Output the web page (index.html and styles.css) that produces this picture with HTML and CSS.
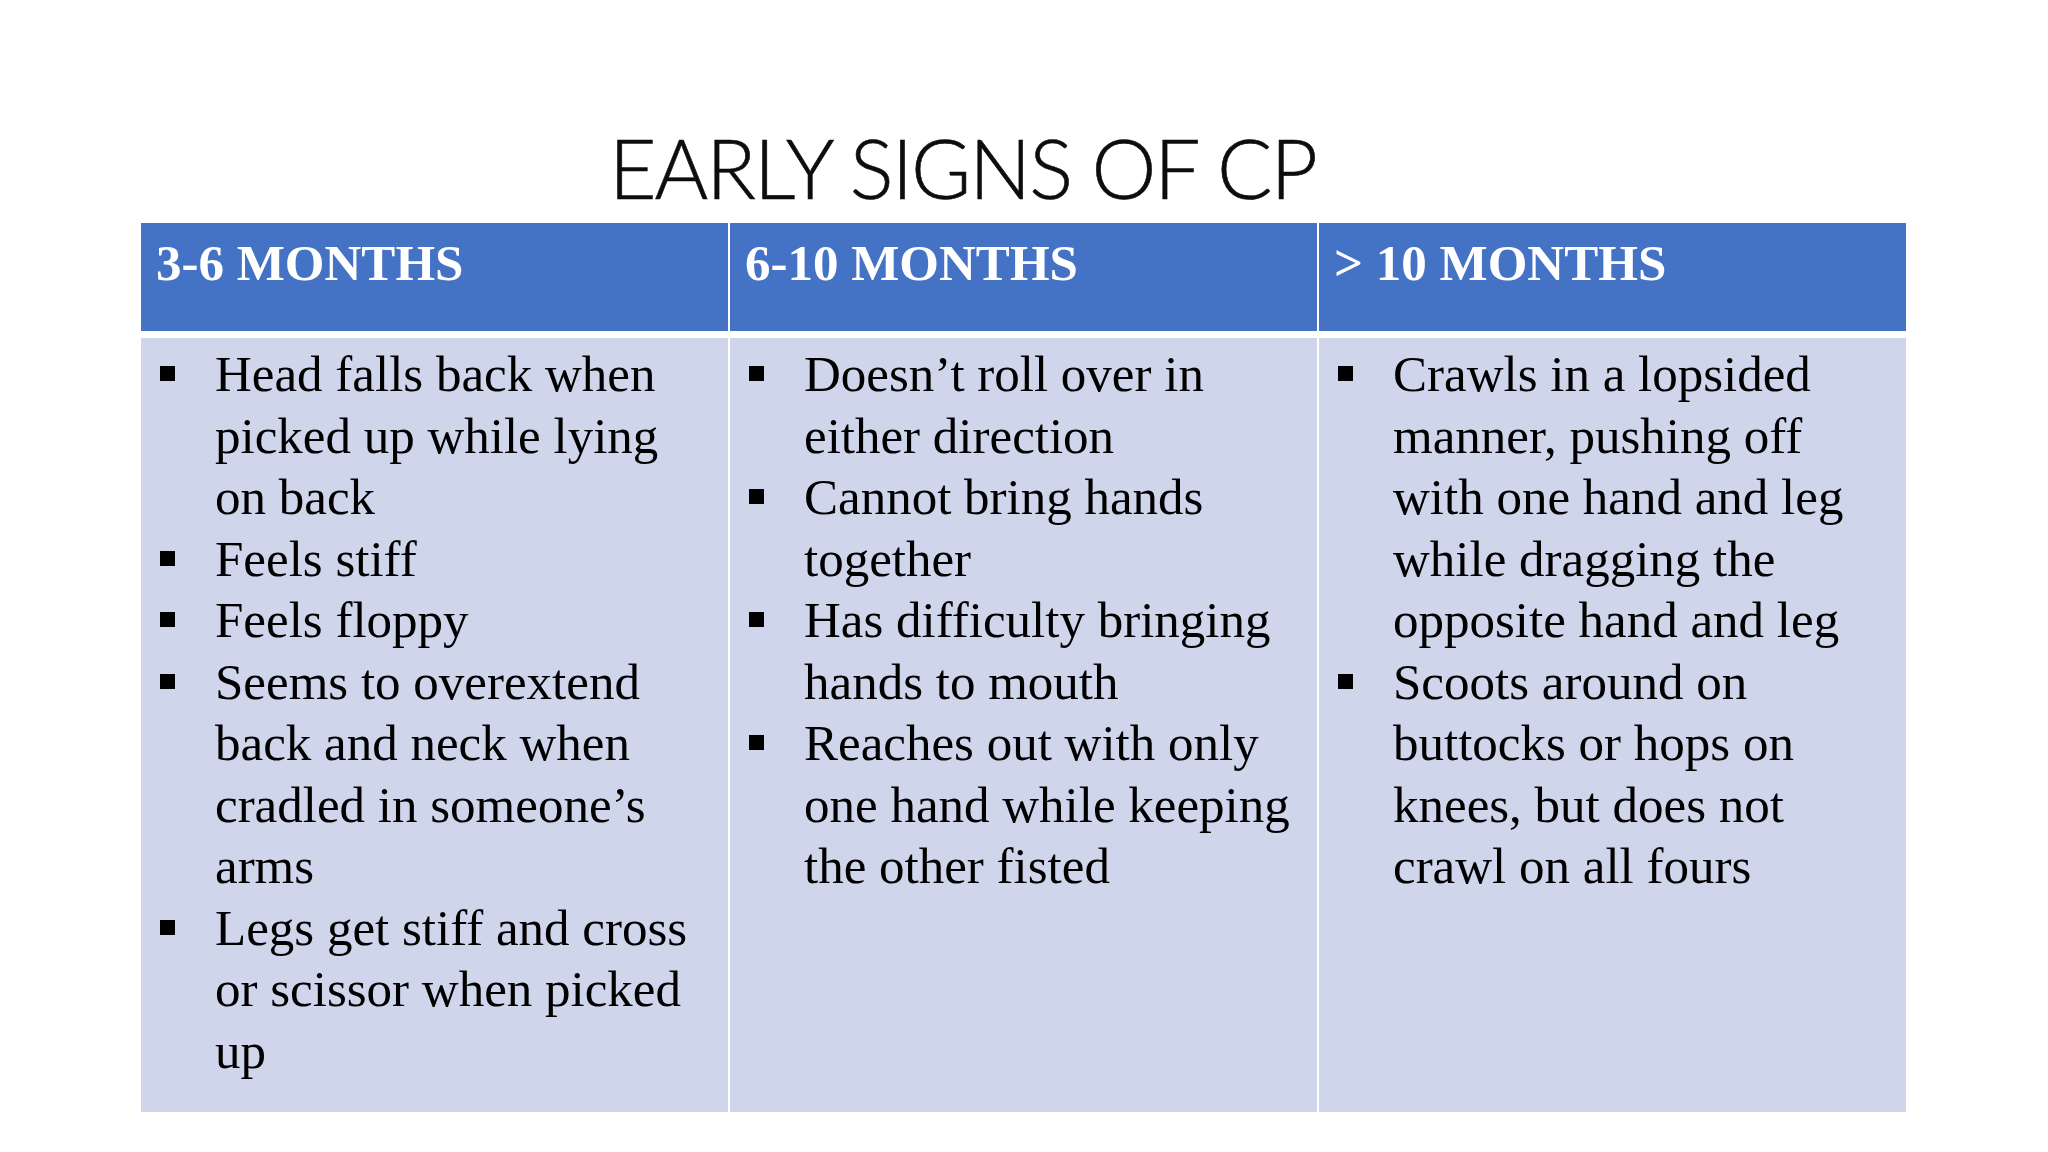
FILE: index.html
```html
<!DOCTYPE html>
<html>
<head>
<meta charset="utf-8">
<link rel="stylesheet" href="styles.css">
</head>
<body>
<div class="slide">
  <h1 class="title">EARLY SIGNS OF CP</h1>
  <div class="table">
    <div class="head">3-6 MONTHS</div>
    <div class="head">6-10 MONTHS</div>
    <div class="head">&gt; 10 MONTHS</div>
    <div class="cell">
      <ul class="list">
        <li><span class="bullet"></span><span class="txt">Head falls back when picked up while lying on back</span></li>
        <li><span class="bullet"></span><span class="txt">Feels stiff</span></li>
        <li><span class="bullet"></span><span class="txt">Feels floppy</span></li>
        <li><span class="bullet"></span><span class="txt">Seems to overextend back and neck when cradled in someone’s arms</span></li>
        <li><span class="bullet"></span><span class="txt">Legs get stiff and cross or scissor when picked up</span></li>
      </ul>
    </div>
    <div class="cell">
      <ul class="list">
        <li><span class="bullet"></span><span class="txt">Doesn’t roll over in either direction</span></li>
        <li><span class="bullet"></span><span class="txt">Cannot bring hands together</span></li>
        <li><span class="bullet"></span><span class="txt">Has difficulty bringing hands to mouth</span></li>
        <li><span class="bullet"></span><span class="txt">Reaches out with only one hand while keeping the other fisted</span></li>
      </ul>
    </div>
    <div class="cell">
      <ul class="list">
        <li><span class="bullet"></span><span class="txt">Crawls in a lopsided manner, pushing off with one hand and leg while dragging the opposite hand and leg</span></li>
        <li><span class="bullet"></span><span class="txt">Scoots around on buttocks or hops on knees, but does not crawl on all fours</span></li>
      </ul>
    </div>
  </div>
</div>
</body>
</html>
```
FILE: styles.css
```css
html, body {
  margin: 0;
  padding: 0;
  background: #ffffff;
}

.slide {
  width: 2048px;
  height: 1152px;
  padding-top: 126px;
  box-sizing: border-box;
  overflow: hidden;
}

.title {
  margin: 0 0 15px 609px;
  font-family: "Lato", "Liberation Sans", sans-serif;
  font-weight: 300;
  font-size: 82px;
  line-height: 82px;
  letter-spacing: -2px;
  color: #0d0d0d;
  -webkit-text-stroke: 0.6px #0d0d0d;
  white-space: nowrap;
}

.table {
  margin-left: 141px;
  width: 1765px;
  display: grid;
  grid-template-columns: repeat(3, 1fr);
  grid-template-rows: 108px 774px;
  column-gap: 2px;
  row-gap: 7px;
}

.head {
  background: #4472c4;
  color: #ffffff;
  font-family: "Liberation Serif", "Times New Roman", serif;
  font-weight: bold;
  font-size: 51px;
  line-height: 62px;
  padding: 9px 10px 0 15px;
  white-space: nowrap;
}

.cell {
  background: #cfd5ea;
  padding: 6px 9px 0 0;
}

.list {
  margin: 0;
  padding: 0;
  list-style: none;
  font-family: "Liberation Serif", "Times New Roman", serif;
  font-size: 51px;
  line-height: 61.5px;
  color: #000000;
}

.list li {
  display: flex;
  align-items: flex-start;
}

.bullet {
  flex: none;
  width: 15px;
  height: 15px;
  background: #000000;
  margin: 22px 40px 0 19px;
}

.txt {
  flex: 1;
}
```
